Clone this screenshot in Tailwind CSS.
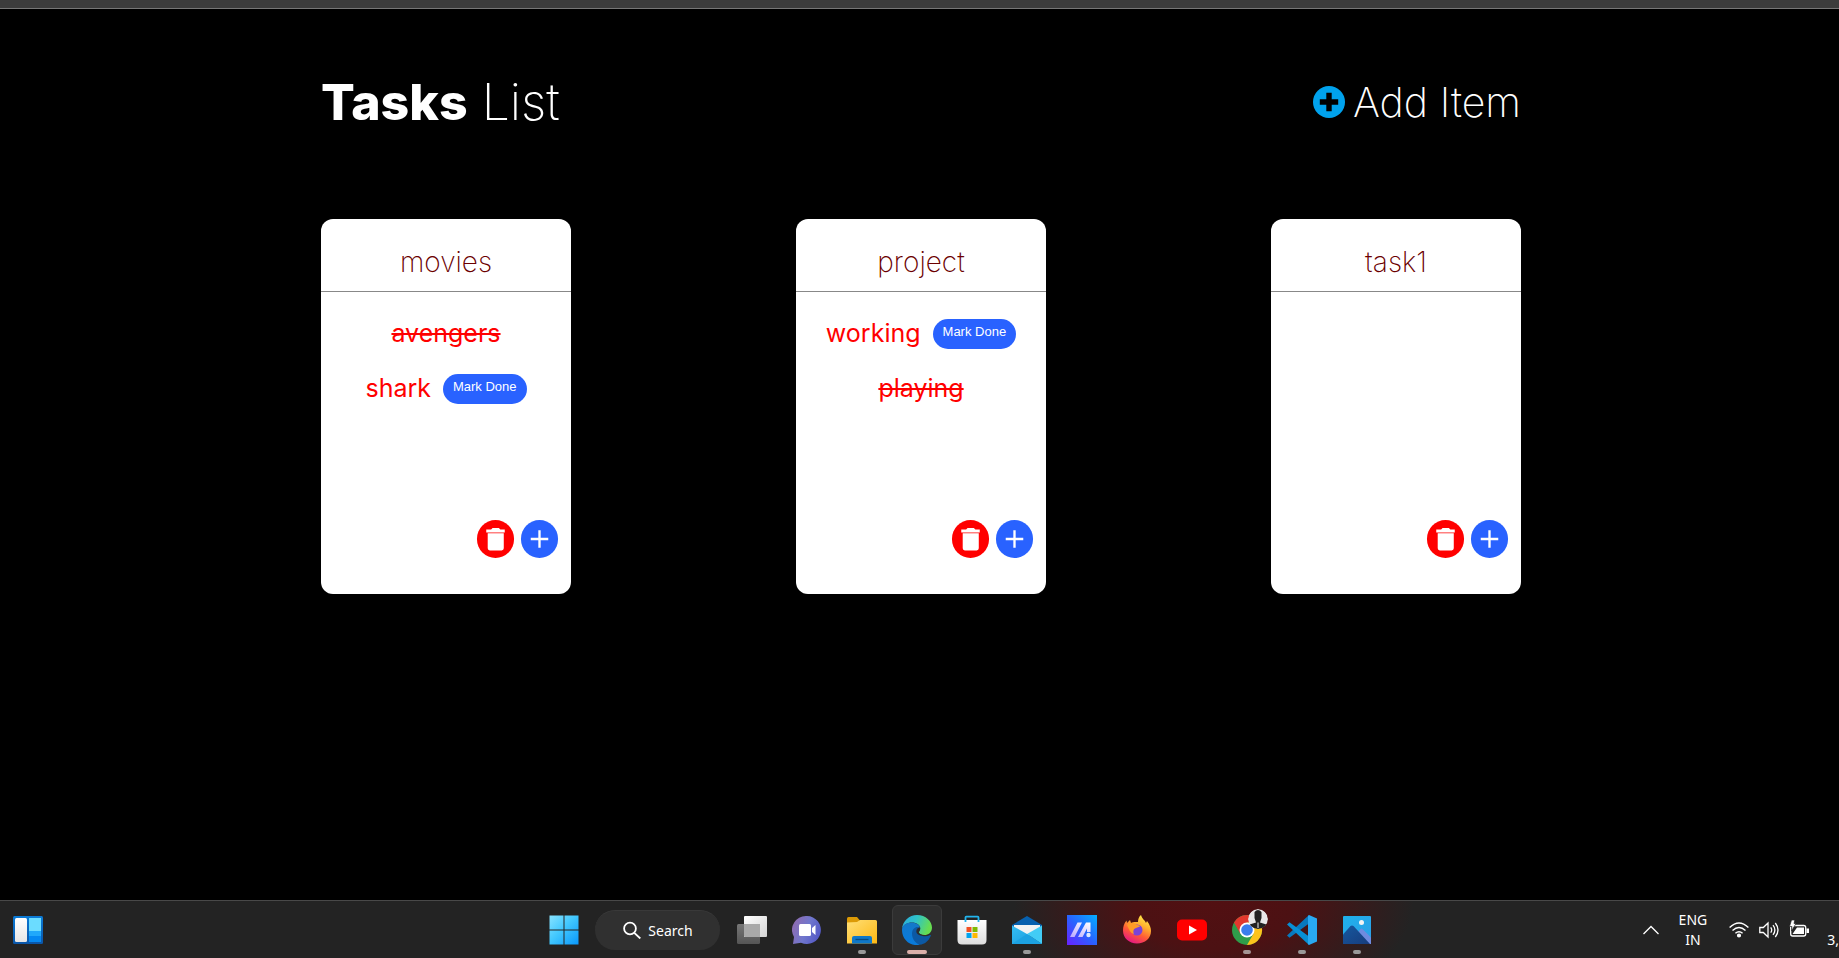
<!DOCTYPE html>
<html lang="en">
<head>
<meta charset="utf-8">
<meta name="viewport" content="width=device-width, initial-scale=1">
<title>Tasks List</title>
<script src="https://cdn.jsdelivr.net/npm/@tailwindcss/browser@4"></script>
</head>
<body class="flex min-h-screen flex-col overflow-x-hidden bg-black font-['Inter',sans-serif] text-white">
<!-- Symbols shared by the cards -->
<svg class="hidden" aria-hidden="true">
  <symbol id="trash" viewBox="0 0 38 38"><path fill="#fff" d="M9.500 9.300h5l1.500-1.500h6.500l1.500 1.500h4.500v2.900h-19z"/><path fill="#fff" d="M11 13h16.500V28.500a2.200 2.200 0 0 1-2.200 2.200h-12.100A2.200 2.200 0 0 1 11 28.500z"/></symbol>
  <symbol id="plus" viewBox="0 0 38 38"><path stroke="#fff" stroke-width="2.400" d="M19 10v18M10 19h18"/></symbol>
</svg>
<div class="h-[9px] border-b border-[#777] bg-[#3c3c3c]"></div>
<main class="grow pt-[63px] pl-[3px]">
  <div class="mx-auto w-full max-w-[1200px]">
    <header class="flex items-center justify-between">
      <h1 class="text-[50px] leading-[60px] font-extralight"><strong class="font-extrabold">Tasks</strong> List</h1>
      <button class="flex items-center gap-2 text-[41px] leading-[60px] font-extralight">
        <svg class="size-8" viewBox="0 0 32 32" aria-hidden="true"><circle cx="16" cy="16" r="16" fill="#00a2ed"/><path stroke="#000" stroke-width="5.400" stroke-linecap="square" d="M16 9.500v13M9.500 16h13"/></svg>
        Add Item
      </button>
    </header>
    <div class="mt-[87px] flex justify-between gap-8">
      <section class="flex min-h-[375px] w-[250px] flex-col rounded-xl bg-white">
        <h2 class="flex h-[73px] items-end justify-center border-b border-[#888] pb-2 text-[28px] font-extralight text-[#6b0000]">movies</h2>
        <ul class="mt-[14px] text-[25px] text-[#f00]">
          <li class="flex h-[55px] items-center justify-center"><s>avengers</s></li>
          <li class="flex h-[55px] items-center justify-center gap-3"><span>shark</span><button class="h-[30px] rounded-full bg-[#2962ff] px-[10px] pb-[3px] font-['Liberation_Sans',sans-serif] text-[13px] text-white">Mark Done</button></li>
        </ul>
        <div class="mt-auto flex justify-end gap-[7px] pr-[13px] pb-9">
          <button class="h-[38px] w-[37px] rounded-full bg-[#f00]" aria-label="Delete movies"><svg class="size-full" aria-hidden="true"><use href="#trash"/></svg></button>
          <button class="h-[38px] w-[37px] rounded-full bg-[#2962ff]" aria-label="Add to movies"><svg class="size-full" aria-hidden="true"><use href="#plus"/></svg></button>
        </div>
      </section>
      <section class="flex min-h-[375px] w-[250px] flex-col rounded-xl bg-white">
        <h2 class="flex h-[73px] items-end justify-center border-b border-[#888] pb-2 text-[28px] font-extralight text-[#6b0000]">project</h2>
        <ul class="mt-[14px] text-[25px] text-[#f00]">
          <li class="flex h-[55px] items-center justify-center gap-3"><span>working</span><button class="h-[30px] rounded-full bg-[#2962ff] px-[10px] pb-[3px] font-['Liberation_Sans',sans-serif] text-[13px] text-white">Mark Done</button></li>
          <li class="flex h-[55px] items-center justify-center"><s>playing</s></li>
        </ul>
        <div class="mt-auto flex justify-end gap-[7px] pr-[13px] pb-9">
          <button class="h-[38px] w-[37px] rounded-full bg-[#f00]" aria-label="Delete project"><svg class="size-full" aria-hidden="true"><use href="#trash"/></svg></button>
          <button class="h-[38px] w-[37px] rounded-full bg-[#2962ff]" aria-label="Add to project"><svg class="size-full" aria-hidden="true"><use href="#plus"/></svg></button>
        </div>
      </section>
      <section class="flex min-h-[375px] w-[250px] flex-col rounded-xl bg-white">
        <h2 class="flex h-[73px] items-end justify-center border-b border-[#888] pb-2 text-[28px] font-extralight text-[#6b0000]">task1</h2>
        <div class="mt-auto flex justify-end gap-[7px] pr-[13px] pb-9">
          <button class="h-[38px] w-[37px] rounded-full bg-[#f00]" aria-label="Delete task1"><svg class="size-full" aria-hidden="true"><use href="#trash"/></svg></button>
          <button class="h-[38px] w-[37px] rounded-full bg-[#2962ff]" aria-label="Add to task1"><svg class="size-full" aria-hidden="true"><use href="#plus"/></svg></button>
        </div>
      </section>
    </div>
  </div>
</main>

<footer class="grid h-[58px] grid-cols-[536fr_848px_455fr] items-center border-t border-[#484848] bg-[#232323] bg-[radial-gradient(ellipse_200px_120px_at_66%_0%,#521012_0%,#4c1113_40%,transparent_100%)] font-['Noto_Sans',sans-serif]">
  <button class="ml-[13px] w-[30px]" aria-label="Widgets">
    <svg class="size-[30px]" viewBox="0 0 30 30"><defs><linearGradient id="wg" x2="0" y2="1"><stop stop-color="#0a7ad6"/><stop offset="1" stop-color="#0b56a8"/></linearGradient><linearGradient id="ww" x2="0" y2="1"><stop stop-color="#fff"/><stop offset="1" stop-color="#e6e6e6"/></linearGradient></defs><rect y="1" width="30" height="28" rx="1.500" fill="url(#wg)"/><rect x="2" y="3" width="12" height="24" rx="1.500" fill="url(#ww)"/><path fill="#6bdcff" d="M16 3h12v13H16z"/><path fill="#20a9fb" d="M16 16h12v5H16z"/><path fill="#0589f2" d="M16 21h12v6H16z"/></svg>
  </button>
  <nav class="flex items-center" aria-label="Apps">
    <button class="flex h-[50px] w-[55px] items-center justify-center" aria-label="Start"><svg class="size-[30px]" viewBox="0 0 30 30"><defs><linearGradient id="wi" gradientUnits="userSpaceOnUse" x1="0" y1="0" x2="30" y2="30"><stop stop-color="#8be4ff"/><stop offset=".45" stop-color="#43c8fe"/><stop offset="1" stop-color="#0796fb"/></linearGradient></defs><path fill="url(#wi)" d="M.5.5h14v14H.5zM15.500.5h14v14h-14zM.5 15.500h14v14H.5zM15.500 15.500h14v14h-14z"/></svg></button>
    <button class="mx-1 flex h-10 w-[125px] items-center justify-center gap-[7px] rounded-full border-t border-[#393939] bg-[#303030] pl-px text-[14px]"><svg class="size-[18px]" viewBox="0 0 18 18" fill="none" stroke="#fff" stroke-width="1.800"><circle cx="7" cy="7.500" r="5.900"/><path d="M11.300 11.800 17.300 17.500"/></svg>Search</button>
    <button class="flex h-[50px] w-[55px] items-center justify-center" aria-label="Task view"><svg class="size-[30px]" viewBox="0 0 30 30"><defs><linearGradient id="tv" x2="1" y2="1"><stop stop-color="#fff"/><stop offset="1" stop-color="#d4d4d4"/></linearGradient><linearGradient id="tg" x2="0" y2="1"><stop stop-color="#777"/><stop offset="1" stop-color="#555"/></linearGradient></defs><rect y="9" width="23" height="20" rx="1.500" fill="url(#tg)"/><rect x="7" y="1" width="23" height="21" rx="1" fill="url(#tv)"/><path fill="#a9a9a9" d="M7 9h16v13H8l-1-1z"/></svg></button>
    <button class="flex h-[50px] w-[55px] items-center justify-center" aria-label="Chat"><svg class="size-[30px]" viewBox="0 0 30 30"><defs><linearGradient id="ch" x1="0" y1=".3" x2="1" y2=".7"><stop stop-color="#8f6bb0"/><stop offset=".5" stop-color="#7077cd"/><stop offset="1" stop-color="#5257c5"/></linearGradient></defs><path fill="url(#ch)" d="M15 1a14 14 0 1 1-6 26.700L1 29l1-7A14 14 0 0 1 15 1z"/><rect x="7" y="9" width="12" height="12" rx="1.500" fill="#fff"/><path fill="#fff" d="m20 13 3.500-3v10L20 17z"/></svg></button>
    <button class="relative flex h-[50px] w-[55px] items-center justify-center" aria-label="File Explorer"><svg class="size-[30px]" viewBox="0 0 30 30"><defs><linearGradient id="fo" x2="1" y2="1"><stop stop-color="#ffdf77"/><stop offset="1" stop-color="#fdb813"/></linearGradient></defs><path fill="#dc9a06" d="M0 3.500Q0 2 1.500 2H10l3 3.500V12H0z"/><path fill="url(#fo)" d="M0 7.500 10 7l3-2h15.500Q30 5 30 6.500V28.500H0z"/><path fill="#0f78c8" d="M5 28.500V23q0-2 2-2h16q2 0 2 2v5.500z"/><path stroke="#074b82" stroke-width="1.300" d="M8.500 24.500h13"/></svg><span class="absolute bottom-px h-1 w-2 rounded-full bg-[#999]"></span></button>
    <button class="relative flex h-[50px] w-[55px] items-center justify-center" aria-label="Edge"><span class="absolute h-[50px] w-[50px] rounded-md border border-[#3b3b3b] bg-[#2e2e2e]"></span><svg class="relative size-[30px]" viewBox="0 0 24 24"><defs><linearGradient id="e1" x2="1" y2=".3"><stop stop-color="#2aa9e0"/><stop offset=".5" stop-color="#2fc3c8"/><stop offset="1" stop-color="#66dd52"/></linearGradient><linearGradient id="e2" x1=".6" x2=".3" y2="1"><stop stop-color="#1478c8"/><stop offset="1" stop-color="#087bdd"/></linearGradient></defs><path fill="#0c59a4" d="M8 12c0-3 3-4.500 5.500-3.500l.5 6.500c2 2.500 5.500 2.500 8.500 1 .4-.2.800.2.500.7A12 12 0 0 1 12 24C8 22 6 17 8 12z"/><path fill="url(#e1)" d="M0 11C.7 4.700 5.700 0 12 0c7 0 12 5 12 10 0 4-3 6-6 6-3.500 0-4.500-1.500-4.500-2.200 0-.6 1.100-1.100 1.100-3C14.600 8 11.700 6 8 6 4 6 1 8 0 11z"/><path fill="url(#e2)" d="M0 12C0 8.500 3.500 6 7.600 6c3.700 0 6.400 1.800 7 4.500C12.500 8.500 8 10 8 15c0 4 2.500 7.500 6 8.700C7 25.500 0 20 0 12z"/><path fill="#2e2e2e" d="M14.500 10c.3 2.200-1 3-1 3.800 0 .9 1.500 2.200 4.500 2.200-3 1.200-7-.5-6.500-3.500.3-1.500 1.500-2.500 3-2.500z"/></svg><span class="absolute bottom-px h-1 w-5 rounded-full bg-[#dbb0aa]"></span></button>
    <button class="flex h-[50px] w-[55px] items-center justify-center" aria-label="Microsoft Store"><svg class="size-[30px]" viewBox="0 0 30 30"><defs><linearGradient id="st" x2="0" y2="1"><stop stop-color="#fff"/><stop offset="1" stop-color="#ddd"/></linearGradient></defs><path fill="url(#st)" d="M.5 5h29v20q0 4.500-4.500 4.500H5Q.5 29.500.5 25z"/><path fill="none" stroke="#22b5ee" stroke-width="1.800" d="M8.500 7V2.500q0-.8.8-.8h11.400q.8 0 .8.8V7"/><path fill="#f25022" d="M9.500 12h5v5h-5z"/><path fill="#7fba00" d="M15.500 12h5v5h-5z"/><path fill="#00a4ef" d="M9.500 18h5v5h-5z"/><path fill="#ffb900" d="M15.500 18h5v5h-5z"/></svg></button>
    <button class="relative flex h-[50px] w-[55px] items-center justify-center" aria-label="Mail"><svg class="size-[30px]" viewBox="0 0 30 30"><defs><linearGradient id="ml" x2="1" y2="1"><stop stop-color="#35bdf3"/><stop offset="1" stop-color="#1699dc"/></linearGradient></defs><path fill="#0760ae" d="M0 10 15 1l15 9v3H0z"/><path fill="#f2f2f2" d="M2 10h26v7L15 21 2 17z"/><path fill="url(#ml)" d="M0 10.500 15 19l15 10H0z"/><path fill="#42ccf6" d="M30 10.500V29L15 19z"/><path fill="#1ca2e2" d="m15 19 15 10H0z"/></svg><span class="absolute bottom-px h-1 w-2 rounded-full bg-[#999]"></span></button>
    <button class="flex h-[50px] w-[55px] items-center justify-center" aria-label="MyASUS"><svg class="size-[30px]" viewBox="0 0 30 30"><defs><linearGradient id="ma" x1="0" y1="1" x2="1" y2="0"><stop stop-color="#6a20ff"/><stop offset=".5" stop-color="#2863ff"/><stop offset="1" stop-color="#02b0ff"/></linearGradient><linearGradient id="mw" x1="0" y1="1" x2="1" y2="0"><stop stop-color="#b8a8ff"/><stop offset="1" stop-color="#fff"/></linearGradient></defs><path fill="url(#ma)" d="M0 0h30v30H0z"/><path fill="url(#mw)" d="M10.500 7.500H15L7.500 22H3zM19 7.500h4.500V17H20v-3.500L15.500 22H11z"/><circle cx="21.500" cy="20" r="2.200" fill="#dce8ff"/></svg></button>
    <button class="flex h-[50px] w-[55px] items-center justify-center" aria-label="Firefox"><svg class="size-[30px]" viewBox="0 0 30 30"><defs><linearGradient id="ff" x1=".8" x2=".3" y2="1"><stop stop-color="#fff04d"/><stop offset=".35" stop-color="#ffb02e"/><stop offset=".65" stop-color="#ff5a36"/><stop offset="1" stop-color="#e31587"/></linearGradient></defs><path fill="url(#ff)" d="M19 0c1 4 4 5 5 8l1-2c3 4 4 7 4 10 0 7.500-6 12.500-14 12.500S1 23 1 15.500c0-4 1-7 3.500-10L5 8l3-3 1 3c2-1.500 5-1 7-1 0-3 1-5.500 3-7z"/><circle cx="15" cy="15" r="5.500" fill="#7a43d8"/><path fill="#ff9b26" d="M5 10c3-3 7-2 10 0 2 .3 3 .8 3 1.500l-4 1.500c-3 1-3 4-2 6-4-1-5-5-7-9z"/></svg></button>
    <button class="flex h-[50px] w-[55px] items-center justify-center" aria-label="YouTube"><svg class="size-[30px]" viewBox="0 0 30 30"><rect y="4.500" width="30" height="21" rx="5" fill="#f00"/><path fill="#fff" d="m12 10.500 8 4.500-8 4.500z"/></svg></button>
    <button class="relative flex h-[50px] w-[55px] items-center justify-center" aria-label="Chrome"><svg class="size-[30px] overflow-visible" viewBox="0 0 30 30"><defs><clipPath id="av"><circle cx="26" cy="4" r="10"/></clipPath></defs><circle cx="15" cy="15" r="15" fill="#2f9c4a"/><path fill="#e2382d" d="M2 7.500a15 15 0 0 1 26 0H15L8.500 19z"/><path fill="#fcc31c" d="M28 7.500A15 15 0 0 1 15 30l6.500-11.200L15 7.500z"/><circle cx="15" cy="15" r="7.500" fill="#fff"/><circle cx="15" cy="15" r="5.800" fill="#3b7ded"/><g clip-path="url(#av)"><circle cx="26" cy="4" r="10" fill="#e8e8e8"/><path fill="#222" d="M22.500-3q3.500-4 7 0v6L28 7.500l8 2.500v6H16v-6l8-2.500L22.500 3z"/><path fill="#888" d="M25 7.500h2V13h-2z"/></g></svg><span class="absolute bottom-px h-1 w-2 rounded-full bg-[#a59595]"></span></button>
    <button class="relative flex h-[50px] w-[55px] items-center justify-center" aria-label="Visual Studio Code"><svg class="size-[30px]" viewBox="0 0 30 30"><path fill="#0879be" d="m0 20.500 2.500 2.300L22 8.500V0z"/><path fill="#078fd5" d="m0 9.500 2.500-2.300L22 21.500V30z"/><path fill="#29a9f2" d="M22 0l8 3.500v23L22 30l-1-1V1z"/></svg><span class="absolute bottom-px h-1 w-2 rounded-full bg-[#999]"></span></button>
    <button class="relative flex h-[50px] w-[55px] items-center justify-center" aria-label="Photos"><svg class="size-[30px]" viewBox="0 0 30 30"><defs><linearGradient id="ph" x2="1" y2="1"><stop stop-color="#1eb1ec"/><stop offset="1" stop-color="#2d9ee6"/></linearGradient><linearGradient id="pm" x2="1" y2="1"><stop stop-color="#16589f"/><stop offset="1" stop-color="#173c7c"/></linearGradient></defs><rect x="1" y="1" width="28" height="28" rx="1" fill="url(#ph)"/><path fill="#6f8bdf" d="m14 20 4.500-6q1-1 2 0L29 22.500V29H14z"/><path fill="url(#pm)" d="m1 19.500 7.500-8.500q1.500-1 3 0L28 29H1z"/><circle cx="19.500" cy="7.500" r="2.500" fill="#f4f4f4"/></svg><span class="absolute bottom-px h-1 w-2 rounded-full bg-[#999]"></span></button>
  </nav>
  <div class="flex items-center justify-end">
    <button class="mr-5" aria-label="Show hidden icons"><svg class="h-[10px] w-4" viewBox="0 0 16 10" fill="none" stroke="#fff" stroke-width="1.300"><path d="m.5 9 7.500-7.500L15.500 9"/></svg></button>
    <button class="mr-[22px] text-center text-[14px] leading-5">ENG<br>IN</button>
    <button class="mr-[18px] flex items-center gap-[10px]" aria-label="Network, volume, battery">
      <svg class="size-5" viewBox="0 0 20 20" fill="none" stroke="#fff" stroke-width="1.400"><path d="M.6 7.500q9.400-9 18.800 0M3.500 10.500q6.500-6 13 0M6.400 13.300q3.600-3.200 7.200 0"/><circle cx="10" cy="15.500" r="1.400" fill="#fff"/></svg>
      <svg class="size-5" viewBox="0 0 20 20" fill="none" stroke="#fff" stroke-width="1.300"><path d="M.8 7.500h3.500L9 3v14l-4.700-4.500H.8zM11.700 7.300q2 2.700 0 5.400M14 5.200q3.800 4.800 0 9.600M16.300 3q5.400 7 0 14"/></svg>
      <svg class="size-5" viewBox="0 0 20 20" fill="none" stroke="#fff" stroke-width="1.300"><rect x="1.700" y="5.500" width="15" height="10.500" rx="2"/><path fill="#fff" stroke="none" d="M8 7.500h7v6.500H3.500zM17.500 8.500h2.500v4.500h-2.500z"/><path fill="#fff" stroke="#232323" stroke-width=".7" d="M2.500 0h3.300L5 3.500h2L2.500 11 3 6.500H.5z"/></svg>
    </button>
    <span class="pt-5 text-[14px] leading-5 whitespace-nowrap">3,</span>
  </div>
</footer>
</body>
</html>
